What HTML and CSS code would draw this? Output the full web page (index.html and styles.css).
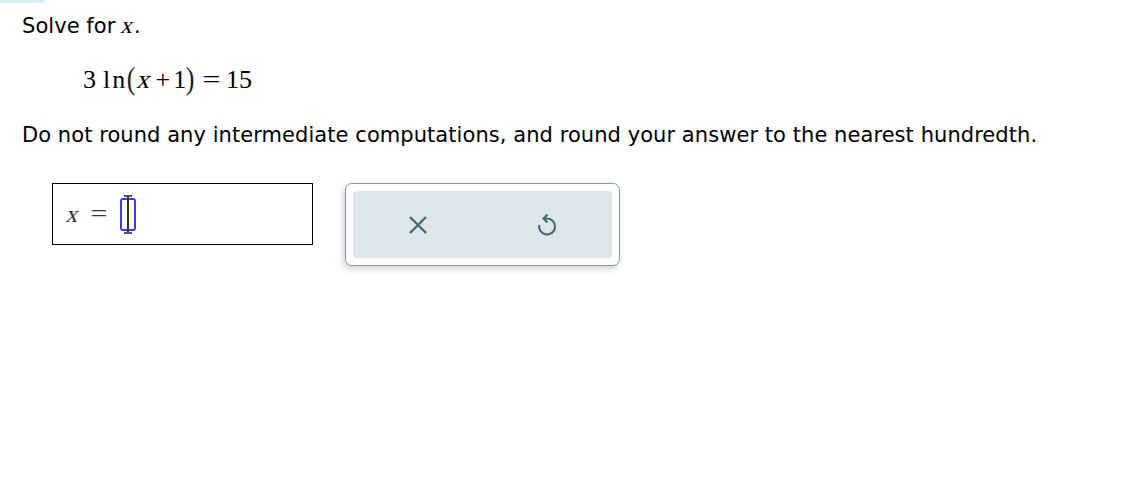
FILE: index.html
```html
<!DOCTYPE html>
<html>
<head>
<meta charset="utf-8">
<link rel="stylesheet" href="styles.css">
</head>
<body>
<div class="tab-edge"></div>
<main class="question">
  <p class="prompt">Solve for <span class="mvar">x</span>.</p>
  <div class="equation"><span class="num">3</span><span class="fn">ln</span><span class="paren">(</span><span class="mvar">x</span><span class="op">+</span><span class="num">1</span><span class="paren">)</span><span class="eq">=</span><span class="num">15</span></div>
  <p class="instruction">Do not round any intermediate computations, and round your answer to the nearest hundredth.</p>
  <div class="answer-row">
    <div class="answer-box">
      <span class="mvar ans-var">x</span>
      <span class="ans-eq">=</span>
      <span class="slot"><span class="caret"></span></span>
    </div>
    <div class="tools">
      <div class="tools-inner">
        <button class="tool-btn" aria-label="Clear">
          <svg width="20" height="20" viewBox="0 0 20 20"><path d="M2 2 L18 18 M18 2 L2 18" stroke="#3d6b79" stroke-width="2.4" fill="none"/></svg>
        </button>
        <button class="tool-btn" aria-label="Undo">
          <svg width="22" height="24" viewBox="0 0 22 24"><path d="M8 5.5 H11 A8 8 0 1 1 3.2 12" stroke="#3d6b79" stroke-width="2.2" fill="none" stroke-linecap="butt"/><path d="M11.5 1.5 L7.5 5.5 L11.5 9.5" stroke="#3d6b79" stroke-width="2.2" fill="none"/></svg>
        </button>
      </div>
    </div>
  </div>
</main>
</body>
</html>
```
FILE: styles.css
```css
html, body {
  margin: 0;
  padding: 0;
  background: #ffffff;
}
body {
  font-family: "DejaVu Sans", Verdana, sans-serif;
  color: #000;
  width: 1137px;
  height: 500px;
  position: relative;
  overflow: hidden;
}
.tab-edge {
  position: absolute;
  left: 0;
  top: 0;
  width: 46px;
  height: 3px;
  background: #d6f0f4;
  border-bottom-right-radius: 4px;
}
.question {
  padding: 12px 0 0 22px;
}
.prompt {
  margin: 0;
  font-size: 21px;
  line-height: 26px;
  letter-spacing: 0.05px;
}
.mvar {
  font-family: "Liberation Serif", "Times New Roman", serif;
  font-style: normal;
  display: inline-block;
  transform: skewX(-14deg);
  font-size: 1.12em;
}
.equation {
  font-family: "Liberation Serif", "Times New Roman", serif;
  font-size: 26px;
  line-height: 30px;
  margin: 25px 0 0 61px;
  white-space: nowrap;
}
.equation .mvar {
  font-size: 1em;
  margin: 0 0 0 2px;
}
.fn {
  margin-left: 7px;
  letter-spacing: 2px;
}
.paren {
  font-size: 1.18em;
  color: #222;
  display: inline-block;
  transform: scaleX(0.85);
  vertical-align: -1px;
  margin: 0 0 0 -1px;
}
.op {
  margin: 0 3px 0 4px;
}
.eq {
  display: inline-block;
  transform: scaleX(1.25);
  margin: 0 7px 0 9px;
}
.instruction {
  margin: 27px 0 0 0;
  font-size: 21px;
  line-height: 26px;
  letter-spacing: 0.06px;
}
.answer-row {
  display: flex;
  align-items: flex-start;
  gap: 32px;
  margin: 35px 0 0 30px;
}
.answer-box {
  box-sizing: border-box;
  width: 261px;
  height: 62px;
  border: 1px solid #000;
  display: flex;
  align-items: center;
  padding-left: 14px;
}
.ans-var {
  font-size: 24px;
  color: #333;
}
.ans-eq {
  font-family: "Liberation Serif", serif;
  font-size: 25px;
  color: #333;
  display: inline-block;
  transform: scaleX(1.2);
  margin: 0 14px 0 13px;
}
.slot {
  position: relative;
  box-sizing: border-box;
  width: 16px;
  height: 33px;
  border: 2px solid #3b3bf5;
  border-radius: 3px;
}
.caret {
  position: absolute;
  left: 5px;
  top: -5px;
  width: 2px;
  height: 39px;
  background: #333;
}
.caret::before, .caret::after {
  content: "";
  position: absolute;
  left: -3px;
  width: 8px;
  height: 2px;
  background: #555;
}
.caret::before { top: 0; }
.caret::after { bottom: 0; }
.tools {
  box-sizing: border-box;
  width: 275px;
  height: 83px;
  border: 1px solid #7f9aa3;
  border-radius: 7px;
  background: #fff;
  padding: 7px;
  box-shadow: -2px 3px 6px rgba(0, 0, 0, 0.18);
}
.tools-inner {
  height: 100%;
  background: #dfe6e8;
  border-radius: 4px;
  display: flex;
  justify-content: space-around;
  align-items: center;
}
.tool-btn {
  border: 0;
  background: transparent;
  padding: 0;
  width: 60px;
  height: 40px;
  display: flex;
  align-items: center;
  justify-content: center;
}
```
